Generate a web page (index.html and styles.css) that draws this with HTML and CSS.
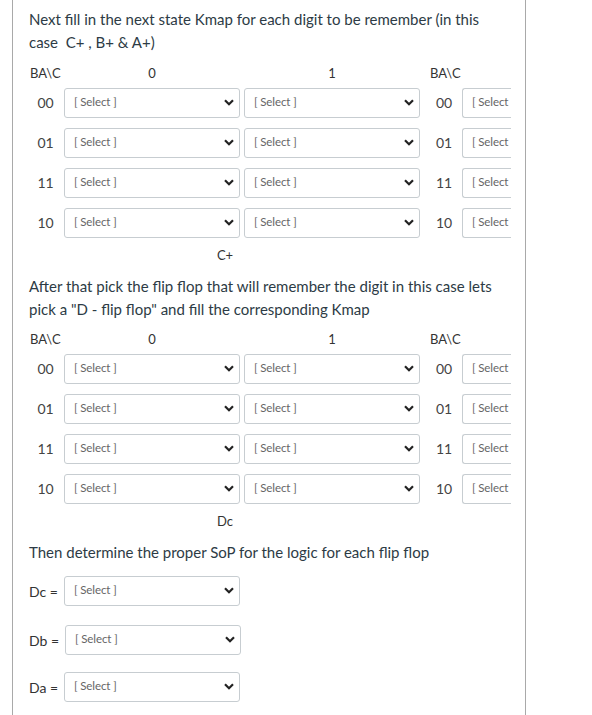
FILE: index.html
```html
<!DOCTYPE html>
<html>
<head>
<meta charset="utf-8">
<link rel="stylesheet" href="styles.css">
</head>
<body>
<div class="page">
  <p class="text first">Next fill in the next state Kmap for each digit to be remember (in this case&nbsp; C+ , B+ &amp; A+)</p>

  <div class="kmap-clip">
    <div class="kmap">
      <div class="hdr left">BA\C</div><div class="hdr">0</div><div class="hdr">1</div><div class="hdr right">BA\C</div><div></div>
      <div class="lbl">00</div><div class="sel"><span>[ Select ]</span><svg viewBox="0 0 10 7"><path d="M1 1.2 5 5.2 9 1.2"/></svg></div><div class="sel"><span>[ Select ]</span><svg viewBox="0 0 10 7"><path d="M1 1.2 5 5.2 9 1.2"/></svg></div><div class="lbl right">00</div><div class="sel cut"><span>[ Select</span></div>
      <div class="lbl">01</div><div class="sel"><span>[ Select ]</span><svg viewBox="0 0 10 7"><path d="M1 1.2 5 5.2 9 1.2"/></svg></div><div class="sel"><span>[ Select ]</span><svg viewBox="0 0 10 7"><path d="M1 1.2 5 5.2 9 1.2"/></svg></div><div class="lbl right">01</div><div class="sel cut"><span>[ Select</span></div>
      <div class="lbl">11</div><div class="sel"><span>[ Select ]</span><svg viewBox="0 0 10 7"><path d="M1 1.2 5 5.2 9 1.2"/></svg></div><div class="sel"><span>[ Select ]</span><svg viewBox="0 0 10 7"><path d="M1 1.2 5 5.2 9 1.2"/></svg></div><div class="lbl right">11</div><div class="sel cut"><span>[ Select</span></div>
      <div class="lbl">10</div><div class="sel"><span>[ Select ]</span><svg viewBox="0 0 10 7"><path d="M1 1.2 5 5.2 9 1.2"/></svg></div><div class="sel"><span>[ Select ]</span><svg viewBox="0 0 10 7"><path d="M1 1.2 5 5.2 9 1.2"/></svg></div><div class="lbl right">10</div><div class="sel cut"><span>[ Select</span></div>
    </div>
  </div>
  <div class="caption">C+</div>

  <p class="text second">After that pick the flip flop that will remember the digit in this case lets pick a "D - flip flop" and fill the corresponding Kmap</p>

  <div class="kmap-clip">
    <div class="kmap">
      <div class="hdr left">BA\C</div><div class="hdr">0</div><div class="hdr">1</div><div class="hdr right">BA\C</div><div></div>
      <div class="lbl">00</div><div class="sel"><span>[ Select ]</span><svg viewBox="0 0 10 7"><path d="M1 1.2 5 5.2 9 1.2"/></svg></div><div class="sel"><span>[ Select ]</span><svg viewBox="0 0 10 7"><path d="M1 1.2 5 5.2 9 1.2"/></svg></div><div class="lbl right">00</div><div class="sel cut"><span>[ Select</span></div>
      <div class="lbl">01</div><div class="sel"><span>[ Select ]</span><svg viewBox="0 0 10 7"><path d="M1 1.2 5 5.2 9 1.2"/></svg></div><div class="sel"><span>[ Select ]</span><svg viewBox="0 0 10 7"><path d="M1 1.2 5 5.2 9 1.2"/></svg></div><div class="lbl right">01</div><div class="sel cut"><span>[ Select</span></div>
      <div class="lbl">11</div><div class="sel"><span>[ Select ]</span><svg viewBox="0 0 10 7"><path d="M1 1.2 5 5.2 9 1.2"/></svg></div><div class="sel"><span>[ Select ]</span><svg viewBox="0 0 10 7"><path d="M1 1.2 5 5.2 9 1.2"/></svg></div><div class="lbl right">11</div><div class="sel cut"><span>[ Select</span></div>
      <div class="lbl">10</div><div class="sel"><span>[ Select ]</span><svg viewBox="0 0 10 7"><path d="M1 1.2 5 5.2 9 1.2"/></svg></div><div class="sel"><span>[ Select ]</span><svg viewBox="0 0 10 7"><path d="M1 1.2 5 5.2 9 1.2"/></svg></div><div class="lbl right">10</div><div class="sel cut"><span>[ Select</span></div>
    </div>
  </div>
  <div class="caption">Dc</div>

  <p class="text third">Then determine the proper SoP for the logic for each flip flop</p>

  <div class="eq eq-c"><span class="eq-lbl">Dc =</span><div class="sel"><span>[ Select ]</span><svg viewBox="0 0 10 7"><path d="M1 1.2 5 5.2 9 1.2"/></svg></div></div>
  <div class="eq eq-b"><span class="eq-lbl">Db =</span><div class="sel"><span>[ Select ]</span><svg viewBox="0 0 10 7"><path d="M1 1.2 5 5.2 9 1.2"/></svg></div></div>
  <div class="eq eq-a"><span class="eq-lbl">Da =</span><div class="sel"><span>[ Select ]</span><svg viewBox="0 0 10 7"><path d="M1 1.2 5 5.2 9 1.2"/></svg></div></div>
</div>
</body>
</html>
```

FILE: styles.css
```css
html, body {
  margin: 0;
  padding: 0;
  background: #ffffff;
}

body {
  font-family: Lato, "Open Sans", "Liberation Sans", sans-serif;
  color: #2d3b45;
}

.page {
  margin-left: 12px;
  width: 514px;
  min-height: 715px;
  box-sizing: border-box;
  border-left: 1px solid #a9a9a9;
  border-right: 1px solid #a9a9a9;
  padding: 8px 14px 0 16px;
}

.text {
  margin: 0;
  font-size: 15px;
  line-height: 23px;
  color: #2d3b45;
}

.text.second { margin-top: 10px; }
.text.third { margin-top: 10px; }

.kmap-clip {
  overflow: hidden;
  margin-top: 9px;
}

.text.second + .kmap-clip { margin-top: 8px; }

.kmap {
  display: grid;
  grid-template-columns: 31px 176px 176px 34px 60px;
  column-gap: 4px;
  row-gap: 10px;
  width: max-content;
}

.kmap > :nth-child(-n+5) {
  margin-bottom: -5px;
}

.hdr {
  font-size: 13px;
  line-height: 20px;
  text-align: center;
  color: #333;
}

.hdr.left {
  text-align: left;
  padding-left: 1px;
}

.hdr.right,
.lbl.right {
  padding-left: 6px;
}

.lbl {
  font-size: 14px;
  line-height: 30px;
  text-align: center;
  color: #444;
  padding-left: 2px;
}

.sel {
  height: 30px;
  box-sizing: border-box;
  border: 1px solid #c7cdd1;
  border-radius: 3px;
  display: flex;
  align-items: center;
  justify-content: space-between;
  padding: 0 5px 1px 9px;
  background: #fff;
}

.sel span {
  font-size: 11.5px;
  color: #666;
  letter-spacing: -0.1px;
  margin-top: -2px;
  white-space: nowrap;
}

.sel svg {
  width: 10px;
  height: 7px;
  fill: none;
  stroke: #222;
  stroke-width: 2.2;
}

.sel.cut {
  border-right: none;
  border-top-right-radius: 0;
  border-bottom-right-radius: 0;
}

.caption {
  margin-top: 7px;
  width: 392px;
  text-align: center;
  font-size: 13px;
  line-height: 20px;
  color: #333;
}

.eq {
  display: flex;
  align-items: center;
  gap: 3px;
}

.eq .sel {
  width: 176px;
}

.eq-lbl {
  font-size: 14px;
  color: #333;
  width: 32px;
}

.eq-c { margin-top: 12px; }
.eq-b { margin-top: 19px; }
.eq-a { margin-top: 17px; }
.eq-b .eq-lbl { width: 33px; }
```
